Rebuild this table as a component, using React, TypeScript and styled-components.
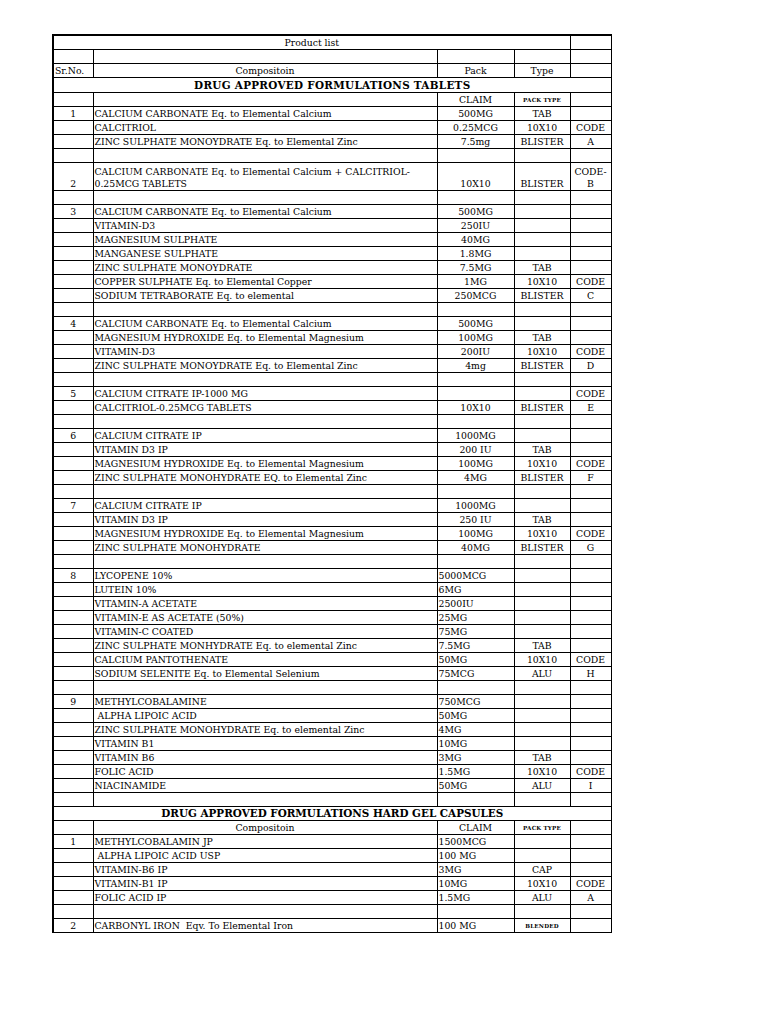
import * as React from 'react'
import styled, { createGlobalStyle } from 'styled-components'

type Item = {
  sr?: string
  comp?: string | string[]
  pack?: string
  type?: string
  code?: string | string[]
  compCenter?: boolean
  packLeft?: boolean
  tall?: boolean
  smallType?: boolean
}

type Row =
  | { kind: 'blank' }
  | { kind: 'heading'; text: string }
  | ({ kind: 'item' } & Item)

const blank: Row = { kind: 'blank' }
const it = (
  sr: string,
  comp: string,
  pack = '',
  type = '',
  code = '',
  packLeft = false
): Row => ({ kind: 'item', sr, comp, pack, type, code, packLeft })

const rows: Row[] = [
  { kind: 'heading', text: 'DRUG APPROVED FORMULATIONS TABLETS' },
  { kind: 'item', pack: 'CLAIM', type: 'PACK TYPE', smallType: true },
  it('1', 'CALCIUM CARBONATE Eq. to Elemental Calcium', '500MG', 'TAB'),
  it('', 'CALCITRIOL', '0.25MCG', '10X10', 'CODE'),
  it('', 'ZINC SULPHATE MONOYDRATE Eq. to Elemental Zinc', '7.5mg', 'BLISTER', 'A'),
  blank,
  {
    kind: 'item',
    sr: '2',
    comp: ['CALCIUM CARBONATE Eq. to Elemental Calcium + CALCITRIOL-', '0.25MCG TABLETS'],
    pack: '10X10',
    type: 'BLISTER',
    code: ['CODE-', 'B'],
    tall: true,
  },
  blank,
  it('3', 'CALCIUM CARBONATE Eq. to Elemental Calcium', '500MG'),
  it('', 'VITAMIN-D3', '250IU'),
  it('', 'MAGNESIUM SULPHATE', '40MG'),
  it('', 'MANGANESE SULPHATE', '1.8MG'),
  it('', 'ZINC SULPHATE MONOYDRATE', '7.5MG', 'TAB'),
  it('', 'COPPER SULPHATE Eq. to Elemental Copper', '1MG', '10X10', 'CODE'),
  it('', 'SODIUM TETRABORATE Eq. to elemental', '250MCG', 'BLISTER', 'C'),
  blank,
  it('4', 'CALCIUM CARBONATE Eq. to Elemental Calcium', '500MG'),
  it('', 'MAGNESIUM HYDROXIDE Eq. to Elemental Magnesium', '100MG', 'TAB'),
  it('', 'VITAMIN-D3', '200IU', '10X10', 'CODE'),
  it('', 'ZINC SULPHATE MONOYDRATE Eq. to Elemental Zinc', '4mg', 'BLISTER', 'D'),
  blank,
  it('5', 'CALCIUM CITRATE IP-1000 MG', '', '', 'CODE'),
  it('', 'CALCITRIOL-0.25MCG TABLETS', '10X10', 'BLISTER', 'E'),
  blank,
  it('6', 'CALCIUM CITRATE IP', '1000MG'),
  it('', 'VITAMIN D3 IP', '200 IU', 'TAB'),
  it('', 'MAGNESIUM HYDROXIDE Eq. to Elemental Magnesium', '100MG', '10X10', 'CODE'),
  it('', 'ZINC SULPHATE MONOHYDRATE EQ. to Elemental Zinc', '4MG', 'BLISTER', 'F'),
  blank,
  it('7', 'CALCIUM CITRATE IP', '1000MG'),
  it('', 'VITAMIN D3 IP', '250 IU', 'TAB'),
  it('', 'MAGNESIUM HYDROXIDE Eq. to Elemental Magnesium', '100MG', '10X10', 'CODE'),
  it('', 'ZINC SULPHATE MONOHYDRATE', '40MG', 'BLISTER', 'G'),
  blank,
  it('8', 'LYCOPENE 10%', '5000MCG', '', '', true),
  it('', 'LUTEIN 10%', '6MG', '', '', true),
  it('', 'VITAMIN-A ACETATE', '2500IU', '', '', true),
  it('', 'VITAMIN-E AS ACETATE (50%)', '25MG', '', '', true),
  it('', 'VITAMIN-C COATED', '75MG', '', '', true),
  it('', 'ZINC SULPHATE MONHYDRATE Eq. to elemental Zinc', '7.5MG', 'TAB', '', true),
  it('', 'CALCIUM PANTOTHENATE', '50MG', '10X10', 'CODE', true),
  it('', 'SODIUM SELENITE Eq. to Elemental Selenium', '75MCG', 'ALU', 'H', true),
  blank,
  it('9', 'METHYLCOBALAMINE', '750MCG', '', '', true),
  it('', ' ALPHA LIPOIC ACID', '50MG', '', '', true),
  it('', 'ZINC SULPHATE MONOHYDRATE Eq. to elemental Zinc', '4MG', '', '', true),
  it('', 'VITAMIN B1', '10MG', '', '', true),
  it('', 'VITAMIN B6', '3MG', 'TAB', '', true),
  it('', 'FOLIC ACID', '1.5MG', '10X10', 'CODE', true),
  it('', 'NIACINAMIDE', '50MG', 'ALU', 'I', true),
  blank,
  { kind: 'heading', text: 'DRUG APPROVED FORMULATIONS HARD GEL CAPSULES' },
  {
    kind: 'item',
    comp: 'Compositoin',
    compCenter: true,
    pack: 'CLAIM',
    type: 'PACK TYPE',
    smallType: true,
  },
  it('1', 'METHYLCOBALAMIN JP', '1500MCG', '', '', true),
  it('', ' ALPHA LIPOIC ACID USP', '100 MG', '', '', true),
  it('', 'VITAMIN-B6 IP', '3MG', 'CAP', '', true),
  it('', 'VITAMIN-B1 IP', '10MG', '10X10', 'CODE', true),
  it('', 'FOLIC ACID IP', '1.5MG', 'ALU', 'A', true),
  blank,
  { kind: 'item', sr: '2', comp: 'CARBONYL IRON  Eqv. To Elemental Iron', pack: '100 MG', type: 'BLENDED', smallType: true, packLeft: true },
]

const Lines = ({ value }: { value?: string | string[] }) => {
  if (!value) return null
  if (typeof value === 'string') return <>{value}</>
  return (
    <>
      {value.map((line, i) => (
        <React.Fragment key={i}>
          {i > 0 && <br />}
          {line}
        </React.Fragment>
      ))}
    </>
  )
}

const ProductList: React.FunctionComponent = () => (
  <Page>
    <GlobalStyle />
    <Sheet>
      <colgroup>
        <col style={{ width: 40 }} />
        <col style={{ width: 344 }} />
        <col style={{ width: 77 }} />
        <col style={{ width: 56 }} />
        <col style={{ width: 41 }} />
      </colgroup>
      <tbody>
        <Row $h={14}>
          <Cell colSpan={4} $align="center">
            Product list
          </Cell>
          <Cell />
        </Row>
        <Row $h={14}>
          <Cell />
          <Cell />
          <Cell />
          <Cell />
          <Cell />
        </Row>
        <Row $h={14}>
          <Cell $align="left">Sr.No.</Cell>
          <Cell $align="center">Compositoin</Cell>
          <Cell $align="center">Pack</Cell>
          <Cell $align="center">Type</Cell>
          <Cell />
        </Row>
        {rows.map((row, i) => {
          if (row.kind === 'blank')
            return (
              <Row key={i} $h={14}>
                <Cell />
                <Cell />
                <Cell />
                <Cell />
                <Cell />
              </Row>
            )
          if (row.kind === 'heading')
            return (
              <Row key={i} $h={i === 0 ? 15 : 14}>
                <HeadingCell colSpan={5} $wide={i === 0}>
                  {row.text}
                </HeadingCell>
              </Row>
            )
          return (
            <Row key={i} $h={row.tall ? 28 : 14}>
              <Cell $align="center">{row.sr}</Cell>
              <Cell $align={row.compCenter ? 'center' : 'left'}>
                <Lines value={row.comp} />
              </Cell>
              <Cell $align={row.packLeft ? 'left' : 'center'}>{row.pack}</Cell>
              <Cell $align="center">
                {row.smallType ? <TinyText>{row.type}</TinyText> : row.type}
              </Cell>
              <Cell $align="center">
                <Lines value={row.code} />
              </Cell>
            </Row>
          )
        })}
      </tbody>
    </Sheet>
  </Page>
)

const GlobalStyle = createGlobalStyle`
  html, body {
    margin: 0;
    padding: 0;
    background: #ffffff;
  }
  body {
    font-family: "DejaVu Serif", "Liberation Serif", serif;
    color: #000000;
  }
`

const Page = styled.div`
  padding: 34px 0 0 52px;
`

const Sheet = styled.table`
  width: 558px;
  table-layout: fixed;
  border-collapse: collapse;
  border-top: 2px solid #000;
  border-left: 2px solid #000;
  border-right: 1px solid #000;
  border-bottom: 1px solid #000;
`

const Row = styled.tr<{ $h: number }>`
  height: ${(props) => props.$h}px;
`

const Cell = styled.td<{ $align?: 'left' | 'center' }>`
  border: 1px solid #000;
  padding: 0 1px;
  font-size: 9.3px;
  line-height: 12px;
  text-align: ${(props) => props.$align || 'left'};
  vertical-align: bottom;
  white-space: pre;
  overflow: hidden;
  color: #000;
`

const HeadingCell = styled.td<{ $wide?: boolean }>`
  border: 1px solid #000;
  padding: 0;
  font-size: 10.4px;
  font-weight: bold;
  letter-spacing: ${(props) => (props.$wide ? '0.3px' : '0')};
  line-height: 13px;
  text-align: center;
  vertical-align: bottom;
  white-space: nowrap;
  color: #000;
`

const TinyText = styled.span`
  font-size: 5.6px;
  font-weight: bold;
  letter-spacing: 0.2px;
`

export default ProductList
